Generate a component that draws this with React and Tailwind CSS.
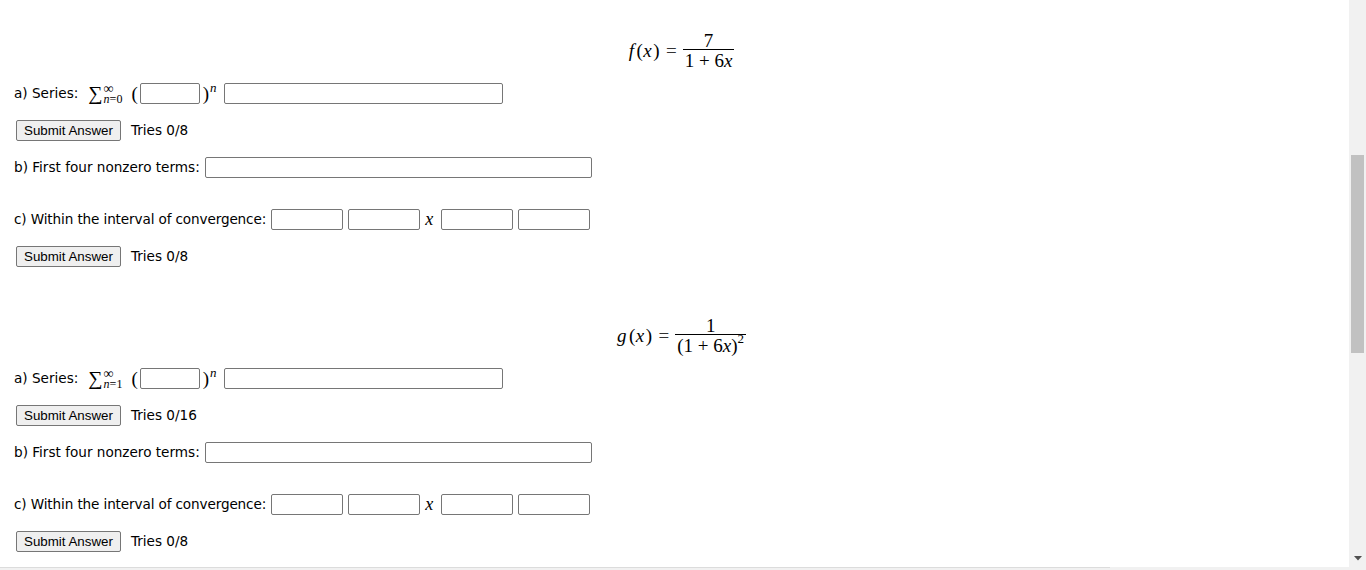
import React from 'react';

const math = { fontFamily: '"Liberation Serif", "DejaVu Serif", serif' };

function Field({ w }) {
    return <input type="text" className={`h-[21px] ${w} border border-[#767676] rounded-[2px] bg-white px-[2px] outline-none`} />;
}

function Submit({ tries }) {
    return (
        <div className="flex h-[24px] items-center">
            <button
                className="ml-[2px] h-[21px] px-[7px] border border-[#767676] rounded-[2px] bg-[#efefef] text-[13.33px] text-black"
                style={{ fontFamily: '"Liberation Sans", Arial, sans-serif' }}
            >
                Submit Answer
            </button>
            <span className="ml-[10px]">Tries {tries}</span>
        </div>
    );
}

function Fraction({ name, num, den }) {
    return (
        <div className="flex items-center justify-center text-[19px] leading-none text-black" style={math}>
            <span className="whitespace-nowrap tracking-[0.5px]">
                <i className="pr-[2px]">{name}</i>(<i className="pr-[1px]">x</i>)
            </span>
            <span className="mx-[6px] text-[#333]">=</span>
            <span className="inline-flex flex-col items-center">
                <span className="h-[18px] flex items-center">{num}</span>
                <span className="w-full border-t border-black"></span>
                <span className="h-[20px] flex items-center px-[2px] whitespace-nowrap">{den}</span>
            </span>
        </div>
    );
}

function Block({ name, num, den, lower, seriesTries, tries, top }) {
    return (
        <div>
            <div className={top}>
                <Fraction name={name} num={num} den={den} />
            </div>

            {/* a) series */}
            <div className="mt-[11px] flex h-[24px] items-center">
                <span>a) Series:</span>
                <span className="ml-[10px] flex items-center leading-none" style={math}>
                    <span className="text-[20px]">∑</span>
                    <span className="inline-flex flex-col ml-[1px] mt-[1px]">
                        <span className="text-[14px] leading-[11px]">∞</span>
                        <span className="text-[12px] leading-[11px]">
                            <i>n</i>={lower}
                        </span>
                    </span>
                    <span className="ml-[9px] text-[19px]">(</span>
                </span>
                <span className="ml-[2px]">
                    <Field w="w-[60px]" />
                </span>
                <span className="ml-[3px] flex items-start leading-none" style={math}>
                    <span className="text-[19px]">)</span>
                    <i className="text-[13px] -mt-[3px] ml-[1px]">n</i>
                </span>
                <span className="ml-[7px]">
                    <Field w="w-[279px]" />
                </span>
            </div>

            <div className="mt-[13px]">
                <Submit tries={seriesTries} />
            </div>

            {/* b) terms */}
            <div className="mt-[13px] flex h-[24px] items-center">
                <span>b) First four nonzero terms:</span>
                <span className="ml-[5px]">
                    <Field w="w-[387px]" />
                </span>
            </div>

            {/* c) interval */}
            <div className="mt-[28px] flex h-[24px] items-center gap-[5px]">
                <span className="tracking-[-0.13px]">c) Within the interval of convergence:</span>
                <Field w="w-[72px]" />
                <Field w="w-[72px]" />
                <i className="mr-[3px] text-[18px] leading-none" style={math}>x</i>
                <Field w="w-[72px]" />
                <Field w="w-[72px]" />
            </div>

            <div className="mt-[13px]">
                <Submit tries={tries} />
            </div>
        </div>
    );
}

export default function App() {
    return (
        <div
            className="h-[570px] w-full flex flex-col overflow-hidden bg-white text-[13.6px] text-black"
            style={{ fontFamily: '"DejaVu Sans", Verdana, sans-serif' }}
        >
            <div className="flex flex-1 min-h-0">
                <div className="flex-1 pl-[14px]">
                    <Block
                        top="mt-[31px]"
                        name="f"
                        num="7"
                        den={<>1 + 6<i>x</i></>}
                        lower="0"
                        seriesTries="0/8"
                        tries="0/8"
                    />
                    <Block
                        top="mt-[48px]"
                        name="g"
                        num="1"
                        den={<>(1 + 6<i>x</i>)<sup className="text-[13px] -top-[6px]">2</sup></>}
                        lower="1"
                        seriesTries="0/16"
                        tries="0/8"
                    />
                </div>

                {/* vertical scrollbar */}
                <div className="w-[17px] bg-[#f1f1f1] flex flex-col items-center">
                    <div className="mt-[155px] h-[198px] w-[13px] bg-[#c1c1c1]"></div>
                    <div className="mt-auto mb-[6px]">
                        <svg width="8" height="5" viewBox="0 0 8 5">
                            <path d="M0 0 H8 L4 4.5 Z" fill="#505050" />
                        </svg>
                    </div>
                </div>
            </div>

            {/* horizontal scrollbar edge */}
            <div className="h-[3px] bg-[#f1f1f1] flex">
                <div className="w-[1110px] h-[1px] bg-[#dcdcdc]"></div>
            </div>
        </div>
    );
}
